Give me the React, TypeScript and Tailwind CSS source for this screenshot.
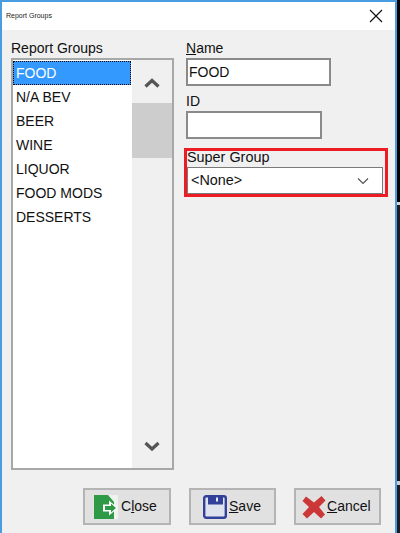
const FONT = "font-['Liberation_Sans',Arial,sans-serif]";

const items = ["FOOD", "N/A BEV", "BEER", "WINE", "LIQUOR", "FOOD MODS", "DESSERTS"];

function CloseIcon() {
  return (
    <svg width="24" height="24" viewBox="0 0 24 24" className="shrink-0">
      <rect x="0" y="0" width="24" height="24" fill="#eef3ee" />
      <path d="M0 0H14L20 7V24H0Z" fill="#2e9a46" />
      <path d="M9 9.5H15V5.5L24 13L15 20.5V16.5H9Z" fill="#fff" />
      <path d="M11 11H17V8.5L22 13L17 17.5V15H11Z" fill="#2e9a46" />
      <rect x="20" y="0" width="4" height="6" fill="#eef3ee" />
    </svg>
  );
}

function SaveIcon() {
  return (
    <svg width="24" height="24" viewBox="0 0 24 24" className="shrink-0">
      <rect x="1.2" y="1.2" width="21.6" height="21.6" rx="2" fill="#dfe2ee" stroke="#33409a" strokeWidth="2.4" />
      <path d="M5 2H20V9.5H5Z" fill="#33409a" />
      <rect x="13" y="2.5" width="2" height="4" fill="#e6e6f0" />
    </svg>
  );
}

function CancelIcon() {
  return (
    <svg width="24" height="24" viewBox="0 0 24 24" className="shrink-0">
      <path d="M4 1.5L12 7.5L19.5 1L23.5 5.5L17 12L23 19.5L19 23.5L12 17L5 23.5L0.5 19L7 12L0.5 6Z" fill="#cc3737" />
    </svg>
  );
}

function Button({ icon, label, cls, gap, u }: { icon: React.ReactNode; label: string; cls: string; gap: string; u: number }) {
  return (
    <button className={`h-[37px] border-2 border-[#b4b4b4] bg-[#e1e1e1] flex items-center text-[14px] text-[#111] ${cls}`}>
      {icon}
      <span className={gap}>
        {label.slice(0, u)}
        <span className="underline">{label[u]}</span>
        {label.slice(u + 1)}
      </span>
    </button>
  );
}

function Chevron({ up }: { up?: boolean }) {
  return (
    <svg width="16" height="12" viewBox="0 0 16 12">
      <path d={up ? "M1.5 10.5L8 4.5L14.5 10.5" : "M1.5 2L8 8L14.5 2"} fill="none" stroke="#555" strokeWidth="3.2" />
    </svg>
  );
}

export default function App() {
  return (
    <div className={`${FONT} w-[400px] h-[533px] bg-black flex text-[14px] text-[#111]`}>
      <div className="w-[397px] h-[533px] border-l-2 border-r-2 border-t-2 border-[#4a9ce0] bg-[#f0f0f0] flex flex-col shrink-0">
        <div className="h-[28px] bg-white flex items-center justify-between pl-[4px] pr-[12px] shrink-0">
          <span className="text-[7px] text-[#222]">Report Groups</span>
          <svg width="14" height="14" viewBox="0 0 14 14">
            <path d="M1 1L13 13M13 1L1 13" stroke="#111" strokeWidth="1.2" fill="none" />
          </svg>
        </div>

        <div className="flex pl-[9px] pt-[10px] flex-1 min-h-0">
          <div className="w-[163px] flex flex-col">
            <div className="h-[17px] leading-[17px]">Report Groups</div>
            <div className="h-[412px] mt-[1px] border-2 border-[#a8a8a8] bg-white flex">
              <ul className="flex-1 pt-[1px] pr-[1px]">
                {items.map((t, i) => (
                  <li
                    key={t}
                    className={
                      i === 0
                        ? "h-[24px] leading-[22px] pl-[2px] bg-[#3399ff] text-white border border-dotted border-black"
                        : "h-[24px] leading-[24px] pl-[3px]"
                    }
                  >
                    {t}
                  </li>
                ))}
              </ul>
              <div className="w-[40px] bg-[#f0f0f0] flex flex-col items-center">
                <div className="h-[43px] flex items-center justify-center"><Chevron up /></div>
                <div className="w-full h-[55px] bg-[#cdcdcd]" />
                <div className="flex-1" />
                <div className="h-[42px] flex items-center justify-center"><Chevron /></div>
              </div>
            </div>
          </div>

          <div className="ml-[12px] flex flex-col w-[204px]">
            <div className="h-[17px] leading-[17px]"><span className="underline">N</span>ame</div>
            <div className="mt-[1px] w-[145px] h-[28px] border-2 border-[#8a8a8a] bg-white leading-[24px] pl-[1px]">FOOD</div>
            <div className="mt-[7px] h-[17px] leading-[17px]">ID</div>
            <div className="mt-[1px] w-[136px] h-[28px] border-2 border-[#8a8a8a] bg-white" />
            <div className="mt-[9px] -ml-[2px] w-[204px] h-[49px] border-[3px] border-[#ed1c24]">
              <div className="h-[16px] leading-[12px] text-[14.4px]">Super Group</div>
              <div className="w-[196px] h-[27px] border border-[#7a7a7a] bg-white flex items-center justify-between pl-[3px] pr-[13px] text-[14.4px]">
                <span>&lt;None&gt;</span>
                <svg width="12" height="8" viewBox="0 0 12 8">
                  <path d="M1 1.5L6 6.5L11 1.5" fill="none" stroke="#555" strokeWidth="1.2" />
                </svg>
              </div>
            </div>
          </div>
        </div>

        <div className="h-[45px] shrink-0 flex pl-[81px] gap-[18px] items-start">
          <Button icon={<CloseIcon />} label="Close" cls="w-[88px] pl-[9px]" gap="ml-[3px]" u={1} />
          <Button icon={<SaveIcon />} label="Save" cls="w-[87px] pl-[12px]" gap="ml-[2px]" u={0} />
          <Button icon={<CancelIcon />} label="Cancel" cls="w-[87px] pl-[6px]" gap="ml-[1px]" u={0} />
        </div>
      </div>
      <div className="flex-1 flex flex-col">
        <div className="h-[202px] bg-black" />
        <div className="h-[3px] bg-[#d8d8d8]" />
        <div className="h-[276px] bg-[#1a1d24]" />
        <div className="h-[4px] bg-[#d0d0d0]" />
        <div className="flex-1 bg-[#1a1d24]" />
      </div>
    </div>
  );
}
